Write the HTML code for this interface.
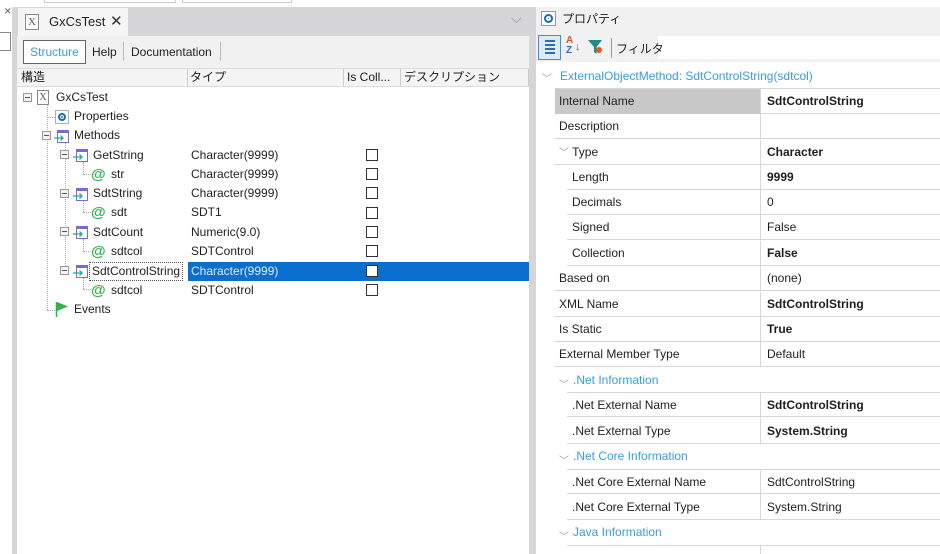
<!DOCTYPE html>
<html><head><meta charset="utf-8"><style>
*{margin:0;padding:0;box-sizing:border-box}
body{width:940px;height:554px;overflow:hidden;background:#fff;font-family:"Liberation Sans","Noto Sans CJK JP",sans-serif;font-size:12px;color:#1e1e1e;position:relative}
.a{position:absolute;white-space:nowrap}
.t{line-height:19px;height:19px}
.cb{position:absolute;width:12px;height:12px;border:1px solid #333;background:#fff}
.exp{position:absolute;width:9px;height:9px;border:1px solid #999;background:#f4f4f4}
.exp:after{content:"";position:absolute;left:1px;top:3px;width:5px;height:1px;background:#555}
.m{position:absolute;width:16px;height:15px}
.at{position:absolute;color:#2db34a;font-weight:bold;font-size:15px;line-height:15px}
.dl{position:absolute;border-left:1px dotted #aaa}
.dh{position:absolute;border-top:1px dotted #aaa}
.r{position:absolute;left:555px;right:0;height:25px;border-bottom:1px solid #d8d8d8;line-height:25px}
.r .l{position:absolute;left:4px}
.r .v{position:absolute;left:205px;border-left:1px solid #d8d8d8;height:25px;padding-left:6px;width:200px}
.b{font-weight:bold}
.g{position:absolute;color:#3a9be0;line-height:25px;height:25px}
.chev{position:absolute;color:#999;font-size:10px}
</style></head><body>
<svg width="0" height="0" style="position:absolute"><defs><symbol id="mi" viewBox="0 0 16 15"><rect x="3.5" y="1.5" width="11" height="12" fill="#fff" stroke="#7a6acd"/><rect x="3" y="1" width="12" height="3" fill="#7a6acd"/><path d="M0 9H9M6.5 6.5L9 9L6.5 11.5" stroke="#1fa8a0" stroke-width="1.3" fill="none"/></symbol></defs></svg>
<div class="a" style="left:0;top:0;width:940px;height:8px;background:#fff"></div>
<div class="a" style="left:44px;top:0;width:132px;height:3px;border:1px solid #ccc;border-top:none"></div>
<div class="a" style="left:182px;top:0;width:110px;height:3px;border:1px solid #ccc;border-top:none"></div>
<div class="a" style="left:4px;top:6px;font-size:9px;color:#555">✕</div>
<div class="a" style="left:0;top:32px;width:11px;height:19px;border:1px solid #888;border-left:none;background:#fff"></div>
<div class="a" style="left:12px;top:7px;width:5px;height:547px;background:#d6d6d9"></div>
<div class="a" style="left:17px;top:7px;width:513px;height:29px;background:#d6d6d9"></div>
<div class="a" style="left:18px;top:8px;width:110px;height:28px;background:#f5f5f6"></div>
<div class="a" style="left:25px;top:14px;width:14px;height:16px;border:1px solid #888;background:#fff;font-family:'Liberation Serif',serif;font-size:11px;text-align:center;line-height:14px;color:#555">X</div>
<div class="a" style="left:49px;top:14px;font-size:13px;color:#222">GxCsTest</div>
<div class="a" style="left:110px;top:12px;font-size:15px;color:#333">✕</div>
<div class="a" style="left:511px;top:10px;font-size:14px;color:#999">⌵</div>
<div class="a" style="left:17px;top:36px;width:513px;height:32px;background:#f1f1f2"></div>
<div class="a" style="left:23px;top:40px;width:63px;height:24px;border:1px solid #666;background:#fff;color:#3a9be0;font-size:12px;line-height:22px;text-align:center">Structure</div>
<div class="a" style="left:92px;top:45px;font-size:12px">Help</div>
<div class="a" style="left:123px;top:42px;width:1px;height:19px;background:#bbb"></div>
<div class="a" style="left:131px;top:45px;font-size:12px">Documentation</div>
<div class="a" style="left:220px;top:42px;width:1px;height:19px;background:#bbb"></div>
<div class="a" style="left:17px;top:68px;width:513px;height:19px;background:#f4f4f4;border-top:1px solid #ddd;border-bottom:1px solid #ddd"></div>
<div class="a t" style="left:21px;top:68px">構造</div>
<div class="a" style="left:187px;top:69px;width:1px;height:17px;background:#ccc"></div>
<div class="a t" style="left:190px;top:68px">タイプ</div>
<div class="a" style="left:343px;top:69px;width:1px;height:17px;background:#ccc"></div>
<div class="a t" style="left:347px;top:68px">Is Coll...</div>
<div class="a" style="left:400px;top:69px;width:1px;height:17px;background:#ccc"></div>
<div class="a t" style="left:404px;top:68px">デスクリプション</div>
<div class="a" style="left:528px;top:69px;width:1px;height:17px;background:#ccc"></div>
<div class="a" style="left:529px;top:7px;width:7px;height:547px;background:#d6d6d9"></div>
<div class="dl" style="left:47px;top:104px;height:206px"></div>
<div class="dh" style="left:47px;top:117px;width:8px"></div>
<div class="dh" style="left:47px;top:310px;width:8px"></div>
<div class="dl" style="left:65px;top:142px;height:130px"></div>
<div class="dl" style="left:83px;top:162px;height:12px"></div><div class="dh" style="left:83px;top:174px;width:8px"></div>
<div class="dl" style="left:83px;top:200px;height:12px"></div><div class="dh" style="left:83px;top:212px;width:8px"></div>
<div class="dl" style="left:83px;top:239px;height:12px"></div><div class="dh" style="left:83px;top:251px;width:8px"></div>
<div class="dl" style="left:83px;top:277px;height:12px"></div><div class="dh" style="left:83px;top:289px;width:8px"></div>
<div class="exp" style="left:23px;top:93px"></div>
<div class="a" style="left:37px;top:90px;width:12px;height:15px;border:1px solid #888;font-family:'Liberation Serif',serif;font-size:10px;text-align:center;line-height:13px;color:#555">X</div>
<div class="a t" style="left:56px;top:88px">GxCsTest</div>
<div class="a" style="left:55px;top:110px;width:14px;height:14px;border:1px solid #aac;background:#fff"><div style="position:absolute;left:2px;top:2px;width:8px;height:8px;border-radius:50%;background:#1a6fb8;border:2px solid #1a6fb8;box-shadow:inset 0 0 0 1px #fff"></div></div>
<div class="a t" style="left:74px;top:107px">Properties</div>
<div class="exp" style="left:42px;top:131px"></div>
<svg class="m" style="left:54px;top:129px"><use href="#mi"/></svg>
<div class="a t" style="left:74px;top:126px">Methods</div>

<div class="exp" style="left:60px;top:150px"></div><svg class="m" style="left:73px;top:148px"><use href="#mi"/></svg>
<div class="a t" style="left:93px;top:146px">GetString</div><div class="a t" style="left:191px;top:146px">Character(9999)</div><div class="cb" style="left:366px;top:149px"></div>
<div class="at" style="left:91px;top:167px">@</div>
<div class="a t" style="left:111px;top:165px">str</div><div class="a t" style="left:191px;top:165px">Character(9999)</div><div class="cb" style="left:366px;top:168px"></div>

<div class="exp" style="left:60px;top:189px"></div><svg class="m" style="left:73px;top:187px"><use href="#mi"/></svg>
<div class="a t" style="left:93px;top:184px">SdtString</div><div class="a t" style="left:191px;top:184px">Character(9999)</div><div class="cb" style="left:366px;top:187px"></div>
<div class="at" style="left:91px;top:205px">@</div>
<div class="a t" style="left:111px;top:203px">sdt</div><div class="a t" style="left:191px;top:203px">SDT1</div><div class="cb" style="left:366px;top:207px"></div>

<div class="exp" style="left:60px;top:227px"></div><svg class="m" style="left:73px;top:225px"><use href="#mi"/></svg>
<div class="a t" style="left:93px;top:223px">SdtCount</div><div class="a t" style="left:191px;top:223px">Numeric(9.0)</div><div class="cb" style="left:366px;top:226px"></div>
<div class="at" style="left:91px;top:244px">@</div>
<div class="a t" style="left:111px;top:242px">sdtcol</div><div class="a t" style="left:191px;top:242px">SDTControl</div><div class="cb" style="left:366px;top:245px"></div>

<div class="a" style="left:188px;top:262px;width:341px;height:19px;background:#0a6fcf"></div>
<div class="exp" style="left:60px;top:266px"></div><svg class="m" style="left:73px;top:264px"><use href="#mi"/></svg>
<div class="a t" style="left:89px;top:262px;border:1px dotted #555;padding:0 2px;line-height:17px">SdtControlString</div><div class="a t" style="left:191px;top:262px;color:#dfe9f7">Character(9999)</div><div class="cb" style="left:366px;top:265px"></div>
<div class="at" style="left:91px;top:283px">@</div>
<div class="a t" style="left:111px;top:281px">sdtcol</div><div class="a t" style="left:191px;top:281px">SDTControl</div><div class="cb" style="left:366px;top:284px"></div>

<svg class="a" style="left:55px;top:301px" width="14" height="17"><path d="M1.5 1V16" stroke="#2db34a" stroke-width="1.5"/><path d="M2 1L13 5.5L2 10Z" fill="#2db34a"/></svg>
<div class="a t" style="left:74px;top:300px">Events</div>

<div class="a" style="left:536px;top:7px;width:404px;height:25px;background:#f1f1f2"></div>
<div class="a" style="left:541px;top:11px;width:15px;height:15px;border:1px solid #999;background:#fff"><div style="position:absolute;left:2px;top:2px;width:9px;height:9px;border-radius:50%;background:#1a6fb8;box-shadow:inset 0 0 0 2px #1a6fb8,inset 0 0 0 4px #fff"></div></div>
<div class="a" style="left:562px;top:10px;font-size:12px">プロパティ</div>
<div class="a" style="left:536px;top:32px;width:404px;height:30px;background:#f1f1f2"></div>
<div class="a" style="left:658px;top:36px;width:282px;height:23px;background:#fff"></div>
<div class="a" style="left:538px;top:35px;width:23px;height:25px;border:1px solid #3a8fdc;background:#dde9f5"></div>
<div class="a" style="left:545px;top:40px;width:10px;height:15px;background:repeating-linear-gradient(#2a6cc0 0 2px,transparent 2px 4px)"></div>
<div class="a" style="left:566px;top:36px;font-size:10px;line-height:10px;color:#d65a2a;font-weight:bold">A<br><span style="color:#2a6cc0">Z</span></div>
<div class="a" style="left:575px;top:41px;font-size:11px;color:#666">↓</div>
<svg class="a" style="left:587px;top:38px" width="17" height="18"><path d="M1 2H15L9.5 9V16L7 14V9Z" fill="#1f8a8a"/><circle cx="12" cy="12" r="3" fill="#e8562a"/></svg>
<div class="a" style="left:611px;top:38px;width:1px;height:20px;background:#999"></div>
<div class="a" style="left:616px;top:40px;font-size:12px">フィルタ</div>
<div class="chev" style="left:542px;top:70px">﹀</div>
<div class="g" style="left:560px;top:64px">ExternalObjectMethod: SdtControlString(sdtcol)</div>
<div class="a" style="left:555px;top:88px;width:385px;height:1px;background:#d8d8d8"></div>

<div class="r" style="top:89px"><div class="a" style="left:0;top:0;width:205px;height:25px;background:#c8c8c8"></div><span class="l">Internal Name</span><span class="v b">SdtControlString</span></div>
<div class="r" style="top:114px"><span class="l">Description</span><span class="v"></span></div>
<div class="r" style="top:140px"><span class="l"><span style="color:#999;font-size:10px">﹀</span> Type</span><span class="v b">Character</span></div>
<div class="r" style="top:165px;left:567px"><span class="l" style="left:5px">Length</span><span class="v b" style="left:193px">9999</span></div>
<div class="r" style="top:190px;left:567px"><span class="l" style="left:5px">Decimals</span><span class="v" style="left:193px">0</span></div>
<div class="r" style="top:215px;left:567px"><span class="l" style="left:5px">Signed</span><span class="v" style="left:193px">False</span></div>
<div class="r" style="top:241px;left:567px"><span class="l" style="left:5px">Collection</span><span class="v b" style="left:193px">False</span></div>
<div class="r" style="top:266px"><span class="l">Based on</span><span class="v">(none)</span></div>
<div class="r" style="top:292px"><span class="l">XML Name</span><span class="v b">SdtControlString</span></div>
<div class="r" style="top:317px"><span class="l">Is Static</span><span class="v b">True</span></div>
<div class="r" style="top:342px"><span class="l">External Member Type</span><span class="v">Default</span></div>
<div class="chev" style="left:559px;top:376px">﹀</div><div class="g" style="left:573px;top:368px">.Net Information</div>
<div class="r" style="left:567px;border-top:1px solid #d8d8d8;top:392px"><span class="l" style="left:5px">.Net External Name</span><span class="v b" style="left:193px">SdtControlString</span></div>
<div class="r" style="top:419px;left:567px"><span class="l" style="left:5px">.Net External Type</span><span class="v b" style="left:193px">System.String</span></div>
<div class="chev" style="left:559px;top:452px">﹀</div><div class="g" style="left:573px;top:444px">.Net Core Information</div>
<div class="r" style="top:469px;left:567px;border-top:1px solid #d8d8d8"><span class="l" style="left:5px">.Net Core External Name</span><span class="v" style="left:193px">SdtControlString</span></div>
<div class="r" style="top:495px;left:567px"><span class="l" style="left:5px">.Net Core External Type</span><span class="v" style="left:193px">System.String</span></div>
<div class="chev" style="left:559px;top:528px">﹀</div><div class="g" style="left:573px;top:520px">Java Information</div>
<div class="a" style="left:567px;top:545px;width:373px;height:1px;background:#d8d8d8"></div>
<div class="a" style="left:760px;top:546px;width:1px;height:8px;background:#d8d8d8"></div>
</body></html>
